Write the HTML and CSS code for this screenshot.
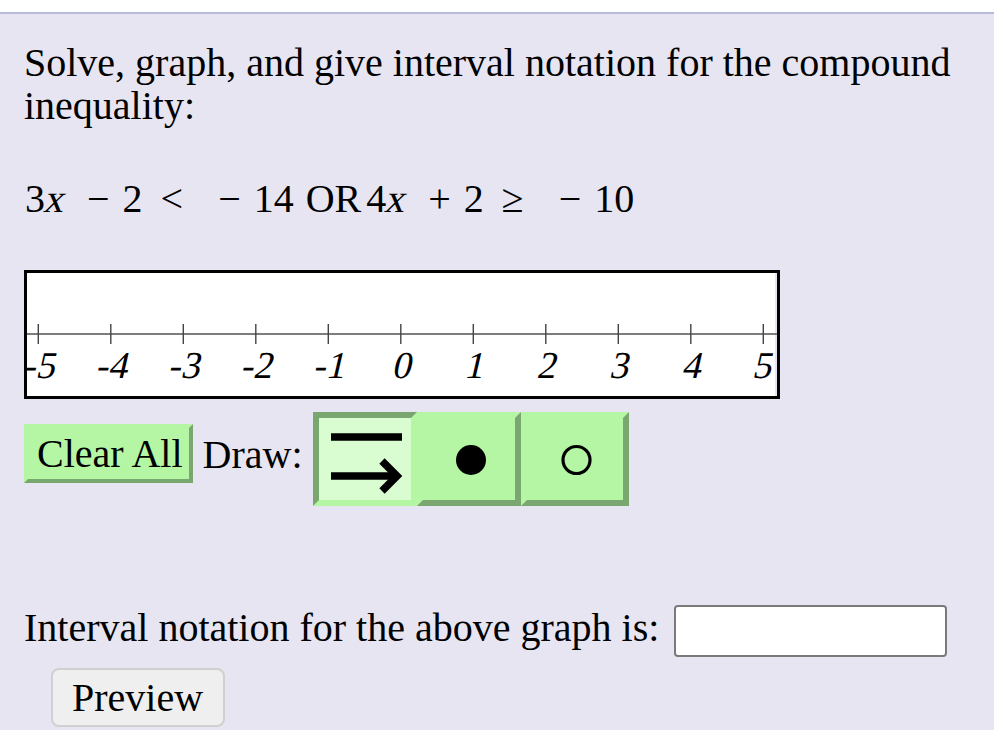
FILE: index.html
```html
<!DOCTYPE html>
<html lang="en">
  <head>
    <meta charset="UTF-8" />
    <meta name="viewport" content="width=device-width, initial-scale=1.0" />
    <title>Compound Inequality</title>
    <link rel="stylesheet" href="styles.css">
  </head>
  <body>
    <div class="topbar"></div>
    <div class="problem">
      <p class="prompt">Solve, graph, and give interval notation for the compound inequality:</p>

      <div class="equation">
        <span class="first">3</span><span class="var">x</span><span class="bin">−</span><span>2</span><span class="rel">&lt;</span><span class="neg">−</span><span>14</span><span class="word">OR</span><span>4</span><span class="var">x</span><span class="bin">+</span><span>2</span><span class="rel">≥</span><span class="neg">−</span><span>10</span>
      </div>

      <svg class="numberline" width="750" height="123" viewBox="0 0 750 123">
        <rect x="748" y="0" width="2" height="123" fill="#e7e5f1" />
        <line x1="0" y1="61" x2="750" y2="61" stroke="#7d7d7d" stroke-width="2" />
        <g stroke="#444" stroke-width="1.4">
          <line x1="11.3" y1="51" x2="11.3" y2="71" />
          <line x1="83.8" y1="51" x2="83.8" y2="71" />
          <line x1="156.3" y1="51" x2="156.3" y2="71" />
          <line x1="228.8" y1="51" x2="228.8" y2="71" />
          <line x1="301.3" y1="51" x2="301.3" y2="71" />
          <line x1="373.8" y1="51" x2="373.8" y2="71" />
          <line x1="446.3" y1="51" x2="446.3" y2="71" />
          <line x1="518.8" y1="51" x2="518.8" y2="71" />
          <line x1="591.3" y1="51" x2="591.3" y2="71" />
          <line x1="663.8" y1="51" x2="663.8" y2="71" />
          <line x1="736.3" y1="51" x2="736.3" y2="71" />
        </g>
        <!-- no serif italic installed, so slant the regular face -->
        <g class="labels" text-anchor="middle">
          <text transform="translate(11.3 105) skewX(-13)">-5</text>
          <text transform="translate(83.8 105) skewX(-13)">-4</text>
          <text transform="translate(156.3 105) skewX(-13)">-3</text>
          <text transform="translate(228.8 105) skewX(-13)">-2</text>
          <text transform="translate(301.3 105) skewX(-13)">-1</text>
          <text transform="translate(373.8 105) skewX(-13)">0</text>
          <text transform="translate(446.3 105) skewX(-13)">1</text>
          <text transform="translate(518.8 105) skewX(-13)">2</text>
          <text transform="translate(591.3 105) skewX(-13)">3</text>
          <text transform="translate(663.8 105) skewX(-13)">4</text>
          <text transform="translate(734.3 105) skewX(-13)">5</text>
        </g>
      </svg>

      <div class="controls">
        <button class="clear">Clear All</button>
        <span class="draw-label">Draw:</span>
        <div class="tools">
          <button class="tool selected" title="Line">
            <svg width="92" height="82" viewBox="0 0 92 82">
              <line x1="12" y1="19" x2="83" y2="19" stroke="#000" stroke-width="7.5" />
              <line x1="12" y1="58" x2="76" y2="58" stroke="#000" stroke-width="7.5" />
              <polyline points="63,43 78,58 63,73" fill="none" stroke="#000" stroke-width="7.5" stroke-linejoin="miter" />
            </svg>
          </button>
          <button class="tool" title="Closed point">
            <svg width="92" height="82" viewBox="0 0 92 82">
              <circle cx="48" cy="42" r="15" fill="#000" />
            </svg>
          </button>
          <button class="tool wide" title="Open point">
            <svg width="96" height="82" viewBox="0 0 96 82">
              <circle cx="49.5" cy="42" r="13.5" fill="none" stroke="#000" stroke-width="3.2" />
            </svg>
          </button>
        </div>
      </div>

      <div class="answer">
        <span class="answer-label">Interval notation for the above graph is:</span>
        <input class="answer-input" type="text" />
      </div>

      <button class="preview">Preview</button>
    </div>
  </body>
</html>
```

FILE: styles.css
```css
* {
  box-sizing: border-box;
}

body {
  margin: 0;
  min-height: 100vh;
  background-color: #e7e5f1;
  font-family: "Liberation Serif", "Times New Roman", serif;
  font-size: 40px;
  color: #000;
}

.topbar {
  height: 14px;
  background-color: #fff;
  border-bottom: 2px solid #b9b9d9;
}

.problem {
  padding: 0 24px;
}

.prompt {
  margin: 27px 0 0;
  line-height: 43px;
  max-width: 940px;
}

.equation {
  display: flex;
  align-items: baseline;
  margin-top: 50px;
  line-height: 44px;
  white-space: nowrap;
}

.equation .first {
  margin-left: 1px;
}

.equation .var {
  display: inline-block;
  font-style: normal;
  transform: skewX(-14deg);
  margin-left: 1px;
}

.equation .bin {
  margin: 0 13px 0 21px;
}

.equation .rel {
  margin: 0 18px;
}

.equation .neg {
  margin: 0 13px 0 17px;
}

.equation .word {
  margin: 0 5px 0 12px;
}

.numberline {
  display: block;
  width: 756px;
  height: 129px;
  margin-top: 49px;
  border: 3px solid #000;
  background-color: #fff;
}

.labels text {
  font-family: "Liberation Serif", "Times New Roman", serif;
  font-size: 38px;
  fill: #000;
}

.controls {
  display: flex;
  align-items: flex-start;
  margin-top: 13px;
}

.clear {
  margin-top: 12px;
  padding: 0 6px 0 9px;
  height: 59px;
  font-family: inherit;
  font-size: 40px;
  line-height: 51px;
  color: #000;
  background-color: #b4f6a4;
  border: 4px solid;
  border-color: #b4f6a4 #79a76f #79a76f #b4f6a4;
  cursor: pointer;
}

.draw-label {
  margin: 21px 0 0 10px;
  line-height: 43px;
}

.tools {
  display: flex;
  margin-left: 10px;
}

.tool {
  display: block;
  width: 104px;
  height: 94px;
  padding: 0;
  background-color: #b4f6a4;
  border: 6px solid;
  border-color: #b4f6a4 #79a76f #79a76f #b4f6a4;
  cursor: pointer;
}

.tool svg {
  display: block;
}

.tool.wide {
  width: 108px;
}

.tool.selected {
  background-color: #d9fcd1;
  border-color: #79a76f #b4f6a4 #b4f6a4 #79a76f;
}

.answer {
  display: flex;
  align-items: flex-start;
  margin-top: 99px;
}

.answer-label {
  margin-top: 1px;
  line-height: 43px;
  white-space: nowrap;
}

.answer-input {
  width: 273px;
  height: 52px;
  margin-left: 15px;
  border: 2px solid #7a7a7a;
  border-radius: 4px;
  background-color: #fff;
}

.preview {
  display: block;
  margin: 11px 0 0 27px;
  height: 59px;
  padding: 0 20px 0 19px;
  font-family: inherit;
  font-size: 40px;
  line-height: 55px;
  color: #000;
  background-color: #efefef;
  border: 2px solid #d0d0d0;
  border-radius: 8px;
  cursor: pointer;
}
```
